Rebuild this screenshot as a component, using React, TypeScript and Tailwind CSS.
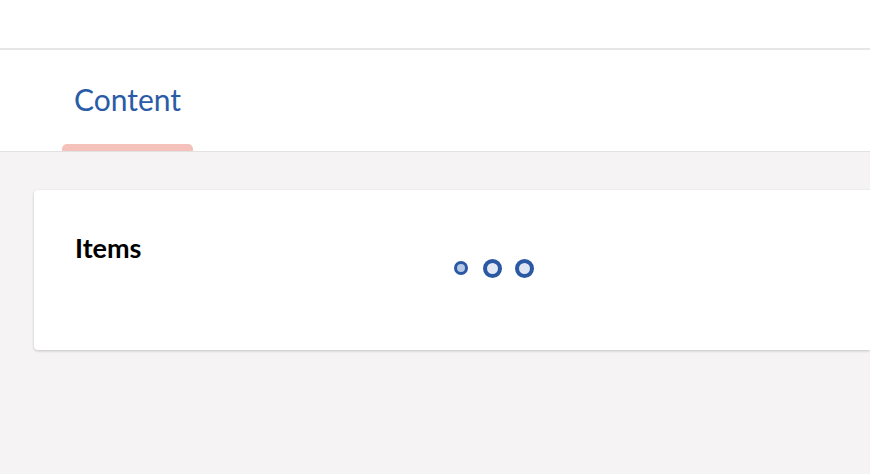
import React from "react";

export default function App() {
  return (
    <div className="w-[870px] h-[474px] overflow-hidden bg-[#f5f3f3] flex flex-col" style={{ fontFamily: "Lato, 'Open Sans', sans-serif" }}>
      <div className="h-[50px] bg-white border-b-2 border-[#e6e6e6] shrink-0" />
      <div className="h-[102px] bg-white border-b border-[#e2e2e2] shrink-0 flex items-end pl-[62px]">
        <div className="flex flex-col items-center w-[131px]">
          <div className="text-[30px] leading-none text-[#2a5ba6] pb-[30px]">Content</div>
          <div className="h-[7px] w-full bg-[#f4c1bb] rounded-t-[5px]" />
        </div>
      </div>
      <div className="pt-[38px] pl-[34px]">
        <div className="h-[160px] bg-white rounded-l-[4px] shadow-[0_1px_3px_rgba(0,0,0,0.2)] flex pl-[41px] pt-[44px]">
          <div className="text-[27px] font-bold leading-none text-black w-[379px]">Items</div>
          <div className="flex items-center h-[24px] mt-[22px]">
            <div className="w-[14px] h-[14px] rounded-full border-[3px] border-[#2a58a3] bg-[#b7c7e6]" />
            <div className="ml-[15px] w-[19px] h-[19px] rounded-full border-[4px] border-[#2a58a3] bg-[#e3e8f5]" />
            <div className="ml-[13px] w-[19px] h-[19px] rounded-full border-[4px] border-[#2a58a3] bg-[#dfe4f3]" />
          </div>
        </div>
      </div>
    </div>
  );
}
